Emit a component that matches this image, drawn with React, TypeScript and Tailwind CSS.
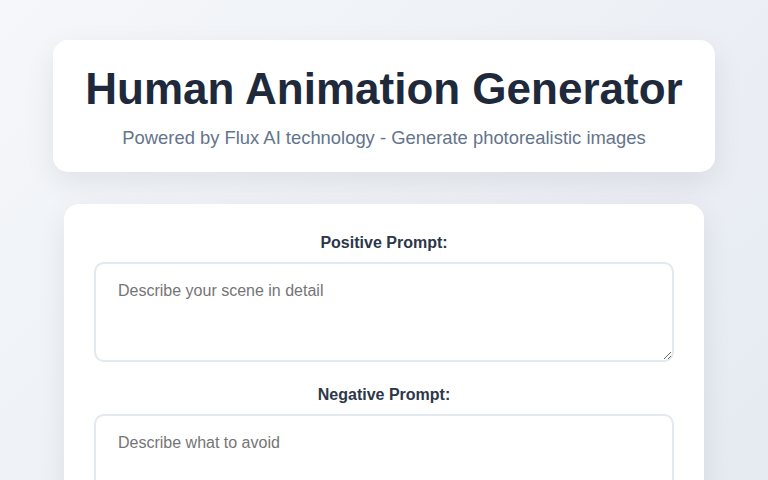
export default function App() {
  return (
    <div
      className="min-h-screen w-full bg-[linear-gradient(135deg,#f5f7fa_0%,#e4e9f1_100%)] px-[53px] pt-[40px] pb-10"
      style={{ fontFamily: '"Liberation Sans", Arial, sans-serif' }}
    >
      <header className="rounded-[15px] bg-white px-6 pt-[22px] pb-[23px] text-center shadow-[0_10px_30px_rgba(0,0,0,0.08)]">
        <h1 className="text-[44px] leading-[54px] font-bold text-[#1e293b]">Human Animation Generator</h1>
        <p className="mt-[10px] text-[18.4px] leading-[23px] text-[#64748b]">
          Powered by Flux AI technology - Generate photorealistic images
        </p>
      </header>

      <main className="mx-auto mt-[32px] w-[640px] rounded-[15px] bg-white p-[30px] shadow-[0_10px_30px_rgba(0,0,0,0.08)]">
        <label className="block text-center text-[16px] leading-[18px] font-bold text-[#2d3748]">Positive Prompt:</label>
        <textarea
          className="mt-[10px] block h-[100px] w-full rounded-[10px] border-2 border-[#e2e8f0] px-[22px] pt-[18px] pb-[16px] text-[16px] leading-[18px] text-[#2d3748] placeholder:text-[#757575] outline-none"
          placeholder="Describe your scene in detail"
        />
        <label className="mt-[24px] block text-center text-[16px] leading-[18px] font-bold text-[#2d3748]">Negative Prompt:</label>
        <textarea
          className="mt-[10px] block h-[100px] w-full rounded-[10px] border-2 border-[#e2e8f0] px-[22px] pt-[18px] pb-[16px] text-[16px] leading-[18px] text-[#2d3748] placeholder:text-[#757575] outline-none"
          placeholder="Describe what to avoid"
        />
      </main>
    </div>
  );
}
